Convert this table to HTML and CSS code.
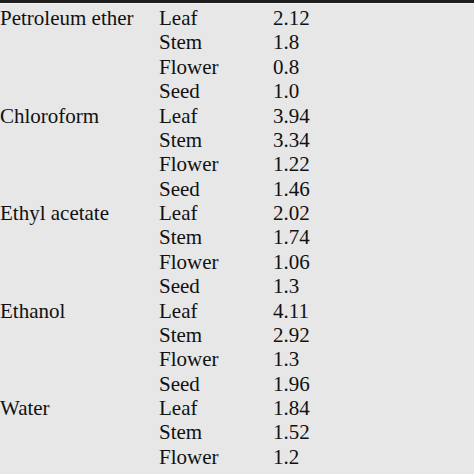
FILE: index.html
```html
<!DOCTYPE html>
<html>
<head>
<meta charset="utf-8">
<link rel="stylesheet" href="styles.css">
</head>
<body>
<div class="topbar"></div>
<div class="table">
  <div class="solvent">Petroleum ether</div><div class="part">Leaf</div><div class="val">2.12</div>
  <div></div><div class="part">Stem</div><div class="val">1.8</div>
  <div></div><div class="part">Flower</div><div class="val">0.8</div>
  <div></div><div class="part">Seed</div><div class="val">1.0</div>
  <div class="solvent">Chloroform</div><div class="part">Leaf</div><div class="val">3.94</div>
  <div></div><div class="part">Stem</div><div class="val">3.34</div>
  <div></div><div class="part">Flower</div><div class="val">1.22</div>
  <div></div><div class="part">Seed</div><div class="val">1.46</div>
  <div class="solvent">Ethyl acetate</div><div class="part">Leaf</div><div class="val">2.02</div>
  <div></div><div class="part">Stem</div><div class="val">1.74</div>
  <div></div><div class="part">Flower</div><div class="val">1.06</div>
  <div></div><div class="part">Seed</div><div class="val">1.3</div>
  <div class="solvent">Ethanol</div><div class="part">Leaf</div><div class="val">4.11</div>
  <div></div><div class="part">Stem</div><div class="val">2.92</div>
  <div></div><div class="part">Flower</div><div class="val">1.3</div>
  <div></div><div class="part">Seed</div><div class="val">1.96</div>
  <div class="solvent">Water</div><div class="part">Leaf</div><div class="val">1.84</div>
  <div></div><div class="part">Stem</div><div class="val">1.52</div>
  <div></div><div class="part">Flower</div><div class="val">1.2</div>
</div>
</body>
</html>
```
FILE: styles.css
```css
html, body {
  margin: 0;
  padding: 0;
  background: #e7e7e7;
  width: 474px;
  height: 474px;
  overflow: hidden;
}
.topbar {
  height: 3px;
  background: #1e1e1e;
  border-bottom: 1px solid #f4f4f4;
}
.table {
  display: grid;
  grid-template-columns: 159px 114px 1fr;
  grid-auto-rows: 24.375px;
  padding-top: 2px;
  font-family: "Liberation Serif", "Times New Roman", serif;
  font-size: 21px;
  line-height: 24.375px;
  color: #111;
}
.table > div {
  white-space: nowrap;
}
```
